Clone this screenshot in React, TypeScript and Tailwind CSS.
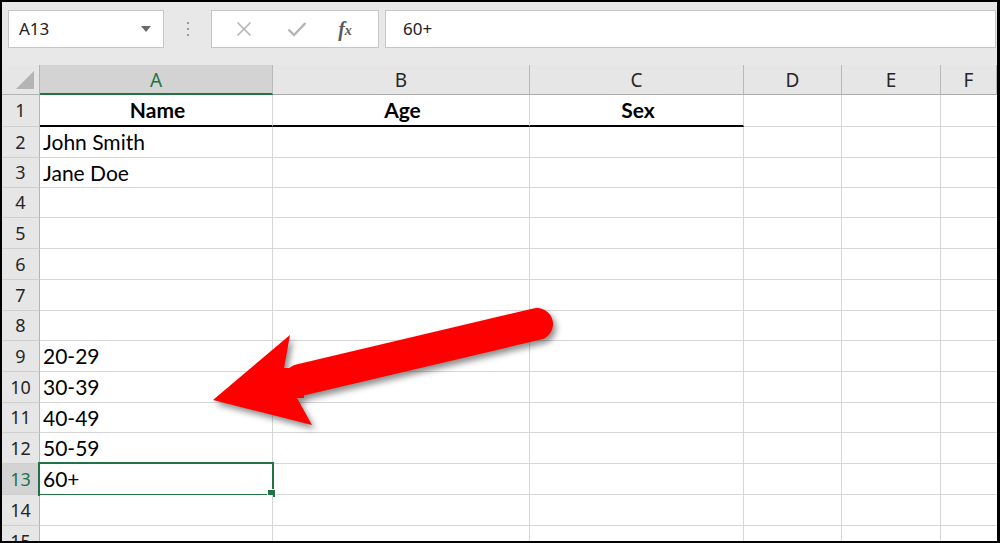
import React from 'react'

// row heights measured from the screenshot (gridline included)
const rows: { n: number; h: string; a?: string; b?: string; c?: string }[] = [
  { n: 1, h: 'h-[32px]', a: 'Name', b: 'Age', c: 'Sex' },
  { n: 2, h: 'h-[31px]', a: 'John Smith' },
  { n: 3, h: 'h-[30px]', a: 'Jane Doe' },
  { n: 4, h: 'h-[30px]' },
  { n: 5, h: 'h-[31px]' },
  { n: 6, h: 'h-[31px]' },
  { n: 7, h: 'h-[31px]' },
  { n: 8, h: 'h-[30px]' },
  { n: 9, h: 'h-[31px]', a: '20-29' },
  { n: 10, h: 'h-[31px]', a: '30-39' },
  { n: 11, h: 'h-[30px]', a: '40-49' },
  { n: 12, h: 'h-[31px]', a: '50-59' },
  { n: 13, h: 'h-[31px]', a: '60+' },
  { n: 14, h: 'h-[31px]' },
  { n: 15, h: 'h-[31px]' },
]

const letters = ['A', 'B', 'C', 'D', 'E', 'F']

function FormulaBar() {
  return (
    <div className="flex h-[63px] shrink-0 items-start bg-[#e8e8e8] pt-[8px] font-['Noto_Sans',sans-serif]">
      {/* name box */}
      <div className="ml-[6px] flex h-[38px] w-[156px] items-center justify-between border border-[#c6c6c6] bg-white pl-[10px] pr-[12px]">
        <span className="text-[17px] text-[#222]">A13</span>
        <svg width="10" height="6" viewBox="0 0 10 6">
          <path d="M0 0 L10 0 L5 6 Z" fill="#6a6a6a" />
        </svg>
      </div>
      {/* grip dots */}
      <div className="flex h-[38px] w-[47px] flex-col items-center justify-center gap-[4px]">
        <span className="h-[2px] w-[2px] bg-[#9a9a9a]" />
        <span className="h-[2px] w-[2px] bg-[#9a9a9a]" />
        <span className="h-[2px] w-[2px] bg-[#9a9a9a]" />
      </div>
      {/* cancel / enter / fx */}
      <div className="flex h-[38px] w-[168px] items-center border border-[#c6c6c6] bg-white">
        <div className="flex w-[62px] justify-center pl-[2px]">
          <svg width="16" height="16" viewBox="0 0 16 16">
            <path d="M1.5 1.5 L14.5 14.5 M14.5 1.5 L1.5 14.5" stroke="#b5b5b5" strokeWidth="1.6" />
          </svg>
        </div>
        <div className="flex w-[46px] justify-center">
          <svg width="20" height="16" viewBox="0 0 20 16">
            <path d="M1.5 8.5 L7 14 L18.5 2" stroke="#b5b5b5" strokeWidth="2.4" fill="none" />
          </svg>
        </div>
        <div className="flex w-[50px] justify-center font-['Liberation_Serif',serif] font-bold italic text-[#5a5a5a]">
          <span className="text-[20px] leading-none">f</span>
          <span className="mt-[5px] text-[14px] leading-none">x</span>
        </div>
      </div>
      {/* formula input */}
      <div className="ml-[6px] mr-[1px] flex h-[38px] flex-1 items-center border border-[#c6c6c6] bg-white pl-[17px]">
        <span className="text-[17px] text-[#222]">60+</span>
      </div>
    </div>
  )
}

function Sheet() {
  return (
    <div className="grid grid-cols-[38px_233px_257px_214px_98px_99px_1fr]">
      {/* column header row */}
      <div className="relative h-[30px] border-r border-b border-[#b4b4b4] bg-[#e6e6e6]">
        <svg className="absolute left-0 top-0" width="38" height="30" viewBox="0 0 38 30">
          <path d="M32 6 L32 24 L14 24 Z" fill="#b4b4b4" />
        </svg>
      </div>
      {letters.map((l) =>
        l === 'A' ? (
          <div
            key={l}
            className="flex h-[30px] items-center justify-center border-r border-b-2 border-r-[#b8b8b8] border-b-[#217346] bg-[#d3d3d3] pt-[2px] font-['Noto_Sans',sans-serif] text-[19px] text-[#217346]"
          >
            {l}
          </div>
        ) : (
          <div
            key={l}
            className="flex h-[30px] items-center justify-center border-r border-b border-r-[#b8b8b8] border-b-[#ababab] bg-[#e6e6e6] pt-[2px] font-['Noto_Sans',sans-serif] text-[19px] text-[#262626]"
          >
            {l}
          </div>
        ),
      )}

      {rows.map((r) => {
        const sel = r.n === 13
        const top = r.n === 1
        const cell = `flex ${r.h} items-center border-r border-[#d6d6d6] bg-white pl-[3px] font-['Lato',sans-serif] text-[21px] text-black`
        const under = top ? 'border-b-2 border-b-black' : 'border-b'
        return (
          <React.Fragment key={r.n}>
            <div
              className={`flex ${r.h} items-center justify-center border-r border-b border-r-[#b4b4b4] border-b-[#cfcfcf] font-['Noto_Sans',sans-serif] text-[18px] ${
                sel ? 'bg-[#d3d3d3] text-[#217346]' : 'bg-[#e6e6e6] text-[#262626]'
              }`}
            >
              {r.n}
            </div>
            <div className={`relative ${cell} ${under} ${top ? 'justify-center pl-0 font-bold' : ''}`}>
              {r.a}
              {sel && (
                <div className="absolute -left-[2px] -top-[2px] h-[34px] w-[236px] border-2 border-[#217346]">
                  <div className="absolute left-[228px] top-[26px] h-[7px] w-[7px] bg-[#217346] ring-1 ring-white" />
                </div>
              )}
            </div>
            <div className={`${cell} ${under} ${top ? 'justify-center pl-0 font-bold' : ''}`}>{r.b}</div>
            <div className={`${cell} ${under} ${top ? 'justify-center pl-0 font-bold' : ''}`}>{r.c}</div>
            <div className={`${cell} border-b`} />
            <div className={`${cell} border-b`} />
            <div className={`${cell} border-b border-r-0`} />
          </React.Fragment>
        )
      })}
    </div>
  )
}

export default function App() {
  return (
    <div className="relative h-[543px] w-[1000px] overflow-hidden border-2 border-r-[3px] border-black bg-white">
      <div className="flex h-full flex-col">
        <FormulaBar />
        <Sheet />
      </div>
      {/* big red callout arrow */}
      <svg
        className="pointer-events-none absolute -left-[2px] -top-[2px] drop-shadow-[3px_4px_3px_rgba(0,0,0,0.45)]"
        width="1000"
        height="543"
        viewBox="0 0 1000 543"
      >
        <line x1="537" y1="324" x2="300" y2="380" stroke="#ff0000" strokeWidth="32" strokeLinecap="round" />
        <path d="M213 400 L290 335 L284 368 L304 368 L304 398 L297 398 L312 425 Z" fill="#ff0000" />
      </svg>
    </div>
  )
}
